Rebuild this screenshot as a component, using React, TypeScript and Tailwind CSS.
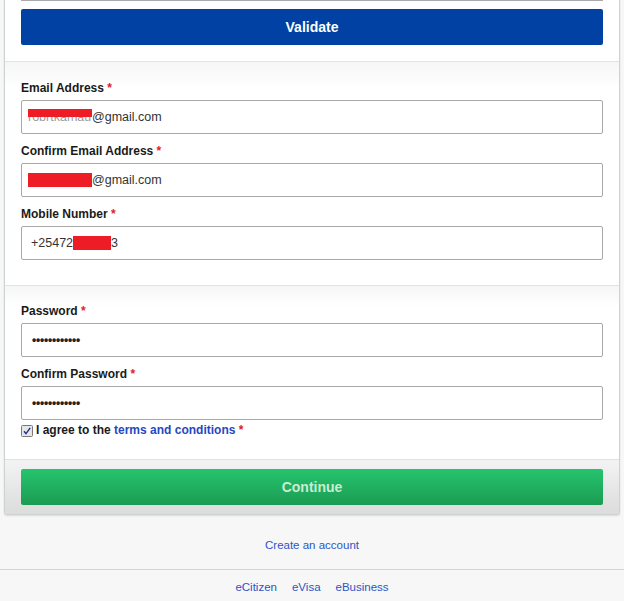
import React from "react";

const Label = ({ text }: { text: string }) => (
  <div className="text-[12px] leading-[15px] font-bold text-[#1a1a1a]">
    {text} <span className="text-[#e0202a]">*</span>
  </div>
);

const Field = ({ children }: { children: React.ReactNode }) => (
  <div className="mt-[4px] h-[34px] flex items-center rounded-[2px] border border-[#a9a9a9] bg-white pl-[6px] text-[12.5px] text-[#333]">
    {children}
  </div>
);

const Redact = ({ w, h = 14 }: { w: number; h?: number }) => (
  <span className="inline-block bg-[#ee1c25]" style={{ width: w, height: h }} />
);

const Dots = () => (
  <span className="pl-[4px] text-[12px] tracking-[-0.2px] text-[#222] font-bold leading-none">••••••••••••</span>
);

export default function App() {
  return (
    <div
      className="w-[624px] h-[601px] overflow-hidden bg-[#f7f7f7]"
      style={{ fontFamily: '"Liberation Sans", Arial, sans-serif' }}
    >
      <div className="mx-[4px] w-[616px] bg-white border-x border-b border-[#cdd3d3] rounded-b-[3px] shadow-[0_1px_2px_rgba(0,0,0,0.12)] overflow-hidden">
        {/* validate block */}
        <div className="px-[16px] pb-[16px]">
          <div className="h-[1px] bg-[#a9a9a9]" />
          <button className="mt-[8px] w-full h-[36px] rounded-[2px] bg-[#0141a3] text-white text-[14px] font-bold">
            Validate
          </button>
        </div>

        {/* contact section */}
        <div className="border-t border-[#e4e4e4] bg-gradient-to-b from-[#f6f6f6] to-white to-[12%] px-[16px] pt-[19px] pb-[25px]">
          <Label text="Email Address" />
          <Field>
            <span className="relative inline-block w-[64px] overflow-hidden whitespace-nowrap text-[#9a9a9a]">
              <span>robrtkamau</span>
              <span className="absolute left-0 top-[1px] w-full h-[8px] bg-[#ee1c25]" />
            </span>
            <span>@gmail.com</span>
          </Field>
          <div className="mt-[10px]">
            <Label text="Confirm Email Address" />
          </div>
          <Field>
            <Redact w={64} />
            <span>@gmail.com</span>
          </Field>
          <div className="mt-[10px]">
            <Label text="Mobile Number" />
          </div>
          <Field>
            <span className="pl-[3px]">+25472</span>
            <Redact w={38} />
            <span>3</span>
          </Field>
        </div>

        {/* password section */}
        <div className="border-t border-[#e4e4e4] bg-gradient-to-b from-[#f6f6f6] to-white to-[12%] px-[16px] pt-[18px] pb-[21px]">
          <Label text="Password" />
          <Field>
            <Dots />
          </Field>
          <div className="mt-[10px]">
            <Label text="Confirm Password" />
          </div>
          <Field>
            <Dots />
          </Field>
          <div className="mt-[3px] flex items-center gap-[3px] text-[12px] leading-[15px] font-bold text-[#1a1a1a]">
            <svg width="12" height="12" viewBox="0 0 12 12">
              <rect x="0.5" y="0.5" width="11" height="11" rx="1" fill="#e6e6e6" stroke="#7a7a7a" />
              <path d="M3 6.2 L5 8.6 L9.2 2.8" fill="none" stroke="#1f2f8f" strokeWidth="1.4" />
            </svg>
            <span>
              I agree to the <span className="text-[#2548c0]">terms and conditions</span>{" "}
              <span className="text-[#e0202a]">*</span>
            </span>
          </div>
        </div>

        {/* continue */}
        <div className="border-t border-[#e0e0e0] bg-gradient-to-b from-[#f3f3f3] to-[#dcdcdc] px-[16px] pt-[9px] pb-[9px]">
          <button className="w-full h-[36px] rounded-[2px] bg-gradient-to-b from-[#25c46f] to-[#1b9c52] text-[#c9ecd3] text-[14px] font-bold">
            Continue
          </button>
        </div>
      </div>

      <div className="mt-[23px] h-[14px] text-center text-[11.5px] leading-[14px] text-[#2d55c4]">
        Create an account
      </div>
      <div className="mt-[17px] border-t border-[#d4d4d4] pt-[10px] flex justify-center gap-[15px] text-[11.5px] leading-[14px] text-[#2d55c4]">
        <span>eCitizen</span>
        <span>eVisa</span>
        <span>eBusiness</span>
      </div>
    </div>
  );
}
